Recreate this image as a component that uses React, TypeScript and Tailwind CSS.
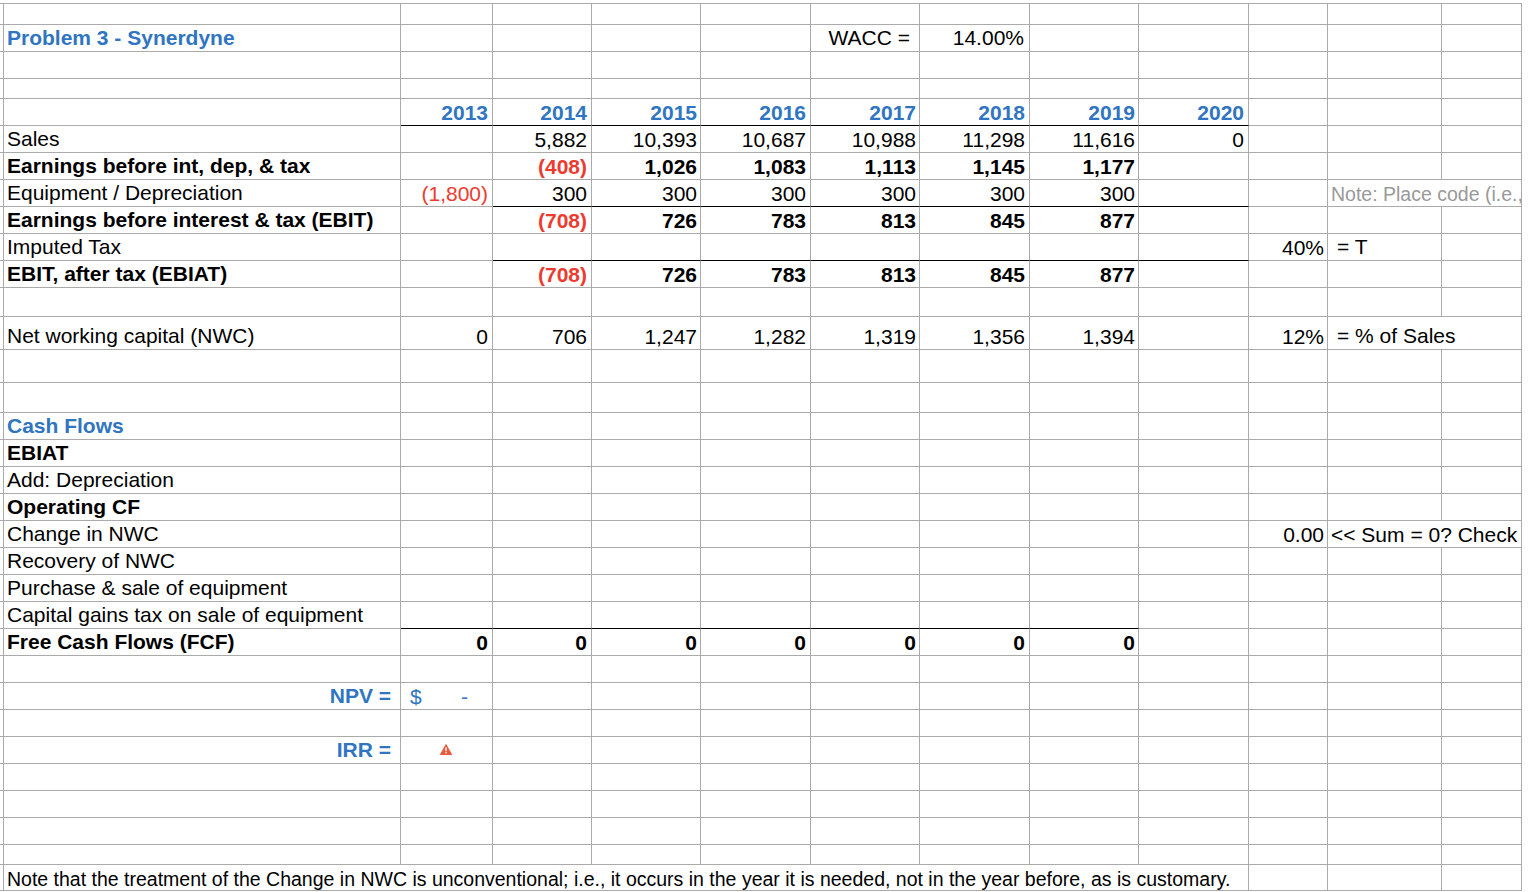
import type { ReactNode } from 'react'

const font = "[font-family:'Liberation_Sans',Arial,sans-serif]"

type Row = {
  h: string
  label?: ReactNode
  labelClass?: string
  vals?: (string | null)[]
  valClass?: string
  black?: number[]
  side?: string
  note?: string
  noteGrey?: boolean
  merge?: boolean
}

const G = 'border-[#aaaaaa]'

// right padding per year column, the sheet's columns are not whole pixels wide
const yearPad = ['pr-[4px]', 'pr-[4px]', 'pr-[3px]', 'pr-[4px]', 'pr-[3px]', 'pr-[4px]', 'pr-[3px]', 'pr-[4px]']

const rows: Row[] = [
  { h: 'h-[21px]' },
  { h: 'h-[27px]', label: 'Problem 3 - Synerdyne', labelClass: 'font-bold text-[#2f75c1]' },
  { h: 'h-[27px]' },
  { h: 'h-[20px]' },
  {
    h: 'h-[27px]',
    vals: ['2013', '2014', '2015', '2016', '2017', '2018', '2019', '2020'],
    valClass: 'font-bold text-[#2f75c1]',
    black: [0, 1, 2, 3, 4, 5, 6, 7],
  },
  { h: 'h-[27px]', label: 'Sales', vals: [null, '5,882', '10,393', '10,687', '10,988', '11,298', '11,616', '0'] },
  {
    h: 'h-[27px]',
    label: 'Earnings before int, dep, & tax',
    labelClass: 'font-bold',
    vals: [null, '(408)', '1,026', '1,083', '1,113', '1,145', '1,177', null],
    valClass: 'font-bold',
  },
  {
    h: 'h-[27px]',
    label: 'Equipment / Depreciation',
    vals: ['(1,800)', '300', '300', '300', '300', '300', '300', null],
    black: [1, 2, 3, 4, 5, 6, 7],
    note: 'Note: Place code (i.e.,',
    noteGrey: true,
    merge: true,
  },
  {
    h: 'h-[27px]',
    label: 'Earnings before interest & tax (EBIT)',
    labelClass: 'font-bold',
    vals: [null, '(708)', '726', '783', '813', '845', '877', null],
    valClass: 'font-bold',
  },
  { h: 'h-[27px]', label: 'Imputed Tax', black: [1, 2, 3, 4, 5, 6, 7], side: '40%', note: '= T' },
  {
    h: 'h-[27px]',
    label: 'EBIT, after tax (EBIAT)',
    labelClass: 'font-bold',
    vals: [null, '(708)', '726', '783', '813', '845', '877', null],
    valClass: 'font-bold',
  },
  { h: 'h-[29px]' },
  {
    h: 'h-[33px]',
    label: 'Net working capital (NWC)',
    vals: ['0', '706', '1,247', '1,282', '1,319', '1,356', '1,394', null],
    side: '12%',
    note: '= % of Sales',
    merge: true,
  },
  { h: 'h-[33px]' },
  { h: 'h-[30px]' },
  { h: 'h-[27px]', label: 'Cash Flows', labelClass: 'font-bold text-[#2f75c1]' },
  { h: 'h-[27px]', label: 'EBIAT', labelClass: 'font-bold' },
  { h: 'h-[27px]', label: 'Add: Depreciation' },
  { h: 'h-[27px]', label: 'Operating CF', labelClass: 'font-bold' },
  { h: 'h-[27px]', label: 'Change in NWC', side: '0.00', note: '<< Sum = 0? Check', merge: true },
  { h: 'h-[27px]', label: 'Recovery of NWC' },
  { h: 'h-[27px]', label: 'Purchase & sale of equipment' },
  { h: 'h-[27px]', label: 'Capital gains tax on sale of equipment', black: [0, 1, 2, 3, 4, 5, 6] },
  {
    h: 'h-[27px]',
    label: 'Free Cash Flows (FCF)',
    labelClass: 'font-bold',
    vals: ['0', '0', '0', '0', '0', '0', '0', null],
    valClass: 'font-bold',
  },
  { h: 'h-[27px]' },
  { h: 'h-[27px]', label: 'NPV =', labelClass: 'font-bold text-[#2f75c1] text-right pr-[9px]' },
  { h: 'h-[27px]' },
  { h: 'h-[27px]', label: 'IRR =', labelClass: 'font-bold text-[#2f75c1] text-right pr-[9px]' },
  { h: 'h-[27px]' },
  { h: 'h-[27px]' },
  { h: 'h-[27px]' },
  { h: 'h-[20px]' },
]

function WarnIcon() {
  return (
    <svg width="12" height="11" viewBox="0 0 12 11" className="absolute left-[39px] bottom-[8px]">
      <path d="M6 0.5 L11.6 10.5 L0.4 10.5 Z" fill="#ea5b3d" stroke="#ea5b3d" strokeLinejoin="round" />
      <rect x="5.3" y="3.4" width="1.4" height="3.8" fill="#fff" />
      <rect x="5.3" y="8" width="1.4" height="1.4" fill="#fff" />
    </svg>
  )
}

function YearCell({ row, i }: { row: Row; i: number }) {
  const v = row.vals?.[i] ?? null
  const isBlack = row.black?.includes(i)
  const red = v !== null && v.startsWith('(')
  const border = isBlack ? 'border-b-black' : 'border-b-[#aaaaaa]'
  return (
    <td className={`relative p-0 border-r border-b border-r-[#aaaaaa] ${border} align-bottom text-right ${yearPad[i]} whitespace-nowrap ${row.valClass ?? ''} ${red ? 'text-[#ee3a2e]' : ''}`}>
      {v}
      {i === 0 && row.label === 'NPV =' && (
        <div className="flex justify-between pl-[9px] pr-[20px] text-[#2f75c1]">
          <span>$</span>
          <span>-</span>
        </div>
      )}
      {i === 0 && row.label === 'IRR =' && <WarnIcon />}
    </td>
  )
}

export default function App() {
  return (
    <div className={`bg-white text-black text-[21px] leading-[24px] ${font}`}>
      <table className="table-fixed border-separate border-spacing-0 w-[1522px]">
        <colgroup>
          <col className="w-[4px]" />
          <col className="w-[397px]" />
          <col className="w-[92px]" />
          <col className="w-[99px]" />
          <col className="w-[109px]" />
          <col className="w-[110px]" />
          <col className="w-[109px]" />
          <col className="w-[110px]" />
          <col className="w-[109px]" />
          <col className="w-[110px]" />
          <col className="w-[79px]" />
          <col className="w-[114px]" />
          <col className="w-[80px]" />
        </colgroup>
        <tbody>
          <tr className="h-[4px]">
            <td colSpan={13} className={`p-0 border-b ${G}`} />
          </tr>
          {rows.map((row, r) => (
            <tr key={r} className={row.h}>
              <td className={`p-0 border-r border-b ${G}`} />
              <td className={`p-0 border-r border-b ${G} align-bottom pl-[3px] pb-[1px] whitespace-nowrap ${row.labelClass ?? ''}`}>
                {row.label}
              </td>
              {r === 1 ? (
                <>
                  {[0, 1, 2, 3].map(i => <td key={i} className={`p-0 border-r border-b ${G}`} />)}
                  <td className={`p-0 border-r border-b ${G} align-bottom text-right pr-[9px] pb-[1px]`}>WACC =</td>
                  <td className={`p-0 border-r border-b ${G} align-bottom text-right pr-[5px] pb-[1px]`}>14.00%</td>
                  {[0, 1].map(i => <td key={i} className={`p-0 border-r border-b ${G}`} />)}
                </>
              ) : (
                [0, 1, 2, 3, 4, 5, 6, 7].map(i => <YearCell key={i} row={row} i={i} />)
              )}
              <td className={`p-0 border-r border-b ${G} align-bottom text-right pr-[3px]`}>{row.side}</td>
              {row.merge ? (
                <td colSpan={2} className={`p-0 border-r border-b ${G} align-bottom pl-[3px] whitespace-nowrap ${row.noteGrey ? 'text-[#999999] text-[19.5px]' : ''} ${row.note?.startsWith('=') ? 'pl-[9px] pb-[1px]' : ''}`}>
                  {row.note}
                </td>
              ) : (
                <>
                  <td className={`p-0 border-r border-b ${G} align-bottom pl-[9px] pb-[1px] whitespace-nowrap`}>{row.note}</td>
                  <td className={`p-0 border-r border-b ${G}`} />
                </>
              )}
            </tr>
          ))}
          <tr className="h-[26px]">
            <td className={`p-0 border-r border-b ${G}`} />
            <td colSpan={9} className={`p-0 border-r border-b ${G} align-bottom pl-[3px] whitespace-nowrap text-[19.5px] leading-[22px]`}>
              Note that the treatment of the Change in NWC is unconventional; i.e., it occurs in the year it is needed, not in the year before, as is customary.
            </td>
            <td className={`p-0 border-r border-b ${G}`} />
            <td className={`p-0 border-r border-b ${G}`} />
            <td className={`p-0 border-r border-b ${G}`} />
          </tr>
        </tbody>
      </table>
    </div>
  )
}
